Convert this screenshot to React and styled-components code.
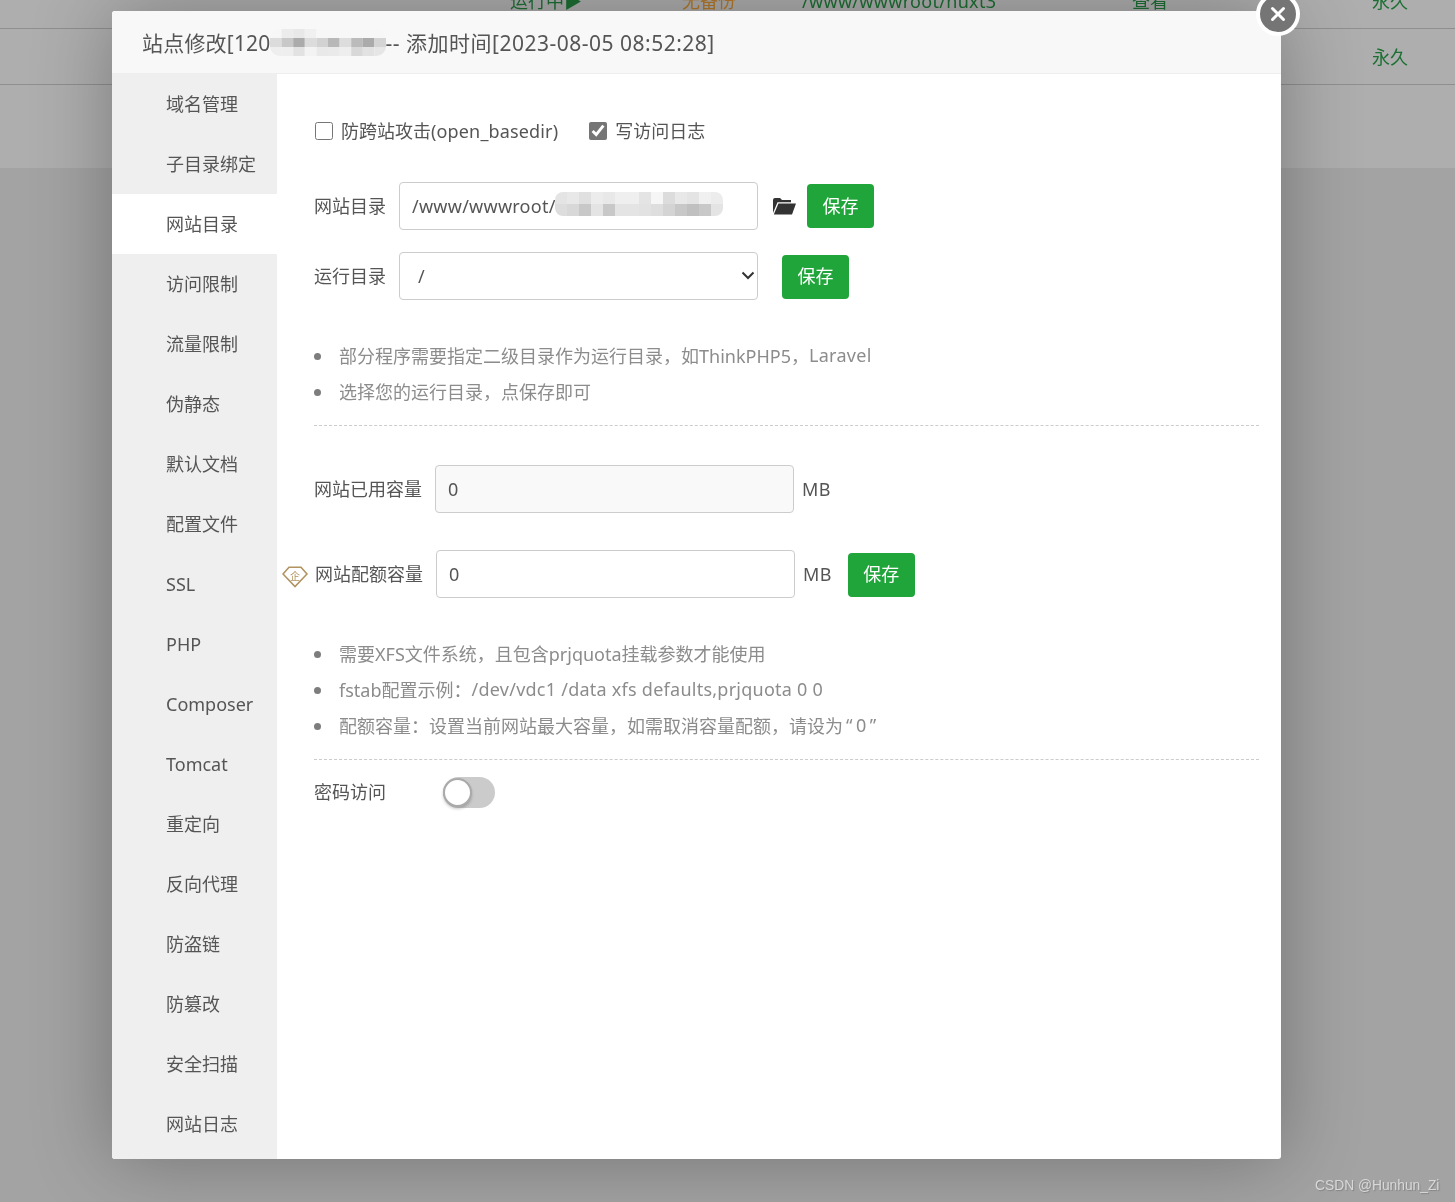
import React from "react";
import styled, { createGlobalStyle } from "styled-components";

const menu = [
  "域名管理", "子目录绑定", "网站目录", "访问限制", "流量限制", "伪静态",
  "默认文档", "配置文件", "SSL", "PHP", "Composer", "Tomcat",
  "重定向", "反向代理", "防盗链", "防篡改", "安全扫描", "网站日志",
];

const titleCells = [
  ["#f7f7f7", "#ececec", "#e8e8e8", "#f0f0f0", "#f7f7f7", "#f7f7f7", "#f7f7f7", "#f7f7f7", "#f7f7f7", "#f7f7f7"],
  ["#dcdcdc", "#c8c8c8", "#ababab", "#dcdcdc", "#d2d2d2", "#b8b8b8", "#dddddd", "#bbbbbb", "#ababab", "#d4d4d4"],
  ["#eeeeee", "#eeeeee", "#e2e2e2", "#f3f3f3", "#e9e9e9", "#eaeaea", "#eeeeee", "#d8d8d8", "#e2e2e2", "#e6e6e6"],
];

const pathCells = [
  ["#e4e4e4", "#e8e8e8", "#e0e0e0", "#ececec", "#e8e8e8", "#efefef", "#efefef", "#e4e4e4", "#f6f6f6", "#dcdcdc", "#e8e8e8", "#e4e4e4", "#f0f0f0", "#ececec"],
  ["#dddddd", "#d8d8d8", "#c8c8c8", "#e4e4e4", "#c8c8c8", "#e4e4e4", "#e4e4e4", "#e2e2e2", "#dedede", "#d4d4d4", "#c8c8c8", "#c0c0c0", "#c8c8c8", "#e4e4e4"],
];

const FONT = `"Noto Sans", "Noto Sans CJK SC", sans-serif`;

const GlobalStyle = createGlobalStyle`
  html, body {
    margin: 0;
    padding: 0;
    height: 100%;
    overflow: hidden;
  }
  body {
    font-family: ${FONT};
    font-size: 18px;
    color: #555;
  }
  * {
    box-sizing: border-box;
  }
`;

const Page = styled.div`
  position: relative;
  height: 1202px;
  overflow: hidden;
  background: #a3a3a3;
  filter: blur(0.35px);
`;
const Backdrop = styled.div`
  height: 168px;
  background: #aeaeae;
  overflow: hidden;
`;
const BackRow = styled.div`
  display: grid;
  grid-template-columns: 510px 172px 120px 330px 240px 1fr;
  height: 56px;
  line-height: 56px;
  border-bottom: 1px solid #8f8f8f;
  color: #1c6f33;
  &:first-child {
    margin-top: -27px;
  }
`;
const BackCell = styled.div`
  color: ${(props) => props.color || "inherit"};
  letter-spacing: ${(props) => props.$spacing || 0}px;
  white-space: nowrap;
`;
const Modal = styled.div`
  position: absolute;
  left: 112px;
  top: 11px;
  width: 1169px;
  height: 1148px;
  display: flex;
  flex-direction: column;
  background: #fff;
  border-radius: 3px;
  box-shadow: 0 0 80px rgba(0, 0, 0, 0.3);
`;
const Close = styled.button`
  position: absolute;
  top: -19px;
  right: -19px;
  width: 44px;
  height: 44px;
  padding: 0;
  display: flex;
  align-items: center;
  justify-content: center;
  border: 4px solid #fff;
  border-radius: 50%;
  background: #757575;
`;
const Title = styled.div`
  height: 63px;
  flex-shrink: 0;
  display: flex;
  align-items: center;
  padding-left: 30px;
  background: #f8f8f8;
  border-bottom: 1px solid #eee;
  border-radius: 3px 3px 0 0;
  font-size: 21px;
  letter-spacing: 0.2px;
  color: #555;
  white-space: pre;
`;
const TitleTail = styled.span`
  letter-spacing: 0.5px;
`;
const Body = styled.div`
  flex: 1;
  display: flex;
  min-height: 0;
`;
const Sidebar = styled.div`
  width: 165px;
  flex-shrink: 0;
  background: #efefef;
  border-bottom-left-radius: 3px;
`;
const MenuItem = styled.div`
  height: 60px;
  line-height: 60px;
  padding-left: 54px;
  white-space: nowrap;
  color: #555;
  background: ${(props) => (props.$active ? "#fff" : "transparent")};
`;
const Pane = styled.div`
  flex: 1;
  padding: 40px 22px 0 37px;
`;
const CheckRow = styled.div`
  display: flex;
  align-items: center;
  height: 34px;
  padding-left: 1px;
  gap: 31px;
`;
const CheckLabel = styled.label`
  display: flex;
  align-items: center;
  gap: 8px;
`;
const CheckText = styled.span`
  padding-bottom: 2px;
`;
const CheckBox = styled.input`
  width: 18px;
  height: 18px;
  margin: 0;
  accent-color: #757575;
`;
const Row = styled.div`
  position: relative;
  display: flex;
  align-items: center;
  height: ${(props) => props.$height || 48}px;
  margin-top: ${(props) => props.$top}px;
  padding-left: ${(props) => props.$indent || 0}px;
`;
const Label = styled.div`
  width: ${(props) => (props.$width ? `${props.$width}px` : "auto")};
  margin-right: 13px;
  padding-bottom: 2px;
  white-space: nowrap;
`;
const FieldWrap = styled.div`
  position: relative;
  width: 359px;
  height: 48px;
`;
const Field = styled.input`
  display: block;
  width: 359px;
  height: 48px;
  padding: 0 12px;
  border: 1px solid #ccc;
  border-radius: 4px;
  font-family: ${FONT};
  font-size: 18px;
  letter-spacing: 0.25px;
  color: #555;
  outline: none;
  background: ${(props) => (props.readOnly ? "#f9f9f9" : "#fff")};
`;
const Select = styled.select`
  display: block;
  width: 359px;
  height: 48px;
  padding: 0 18px;
  appearance: none;
  border: 1px solid #ccc;
  border-radius: 4px;
  font-family: ${FONT};
  font-size: 18px;
  color: #555;
  background: #fff;
`;
const Chevron = styled.svg`
  position: absolute;
  right: 3px;
  top: 19px;
  pointer-events: none;
`;
const PathMosaic = styled.svg`
  position: absolute;
  left: 156px;
  top: 10px;
`;
const TitleMosaic = styled.svg`
  flex-shrink: 0;
  width: 116px;
  margin-left: -1px;
`;
const SaveButton = styled.button`
  width: 67px;
  height: 44px;
  margin-left: ${(props) => props.$left}px;
  margin-top: ${(props) => (props.$low ? 2 : 0)}px;
  padding: 0 0 ${(props) => (props.$low ? 4 : 2)}px;
  border: none;
  border-radius: 4px;
  background: #20a53a;
  color: #fff;
  font-family: ${FONT};
  font-size: 18px;
`;
const FolderIcon = styled.svg`
  margin-left: 14px;
  flex-shrink: 0;
`;
const Unit = styled.span`
  margin-left: 8px;
  letter-spacing: 0.3px;
`;
const Tier = styled.svg`
  position: absolute;
  left: -32px;
  top: 16px;
`;
const Notes = styled.ul`
  margin: ${(props) => props.$top}px 0 0;
  padding: 0;
  list-style: none;
`;
const Note = styled.li`
  display: flex;
  align-items: center;
  height: 36px;
  padding-bottom: 2px;
  color: #8c8c8c;
  white-space: pre;
  &::before {
    content: "";
    width: 7px;
    height: 7px;
    margin: 2px 18px 0 0;
    border-radius: 50%;
    background: #7d7d7d;
  }
`;
const Latin = styled.span`
  letter-spacing: ${(props) => props.$spacing}px;
  margin-left: ${(props) => props.$left || 0}px;
`;
const Divider = styled.div`
  margin-top: 15px;
  border-top: 1px dashed #ccc;
`;
const Toggle = styled.div`
  position: relative;
  width: 52px;
  height: 31px;
  border-radius: 16px;
  background: #cbcbcb;
`;
const Knob = styled.div`
  position: absolute;
  left: 0;
  top: 1px;
  width: 29px;
  height: 29px;
  border: 2px solid #aaa;
  border-radius: 50%;
  background: #fff;
  box-shadow: 0 2px 3px rgba(0, 0, 0, 0.2);
`;
const Watermark = styled.div`
  position: absolute;
  left: 1315px;
  top: 1178px;
  font-family: "Liberation Sans", sans-serif;
  font-size: 13.8px;
  color: #d8d8d8;
  text-shadow: 1px 1px 1px #858585;
  white-space: nowrap;
`;

const Mosaic = ({ as: Wrap, rows, height, round }) => {
  const width = rows[0].length * 12;
  const rowH = height / rows.length;
  return (
    <Wrap width={width} height={height} viewBox={`0 0 ${width} ${height}`} preserveAspectRatio="none">
      <defs>
        <clipPath id={`clip-${width}`}>
          <rect width={width} height={height} rx={round} />
        </clipPath>
      </defs>
      <g clipPath={`url(#clip-${width})`}>
        {rows.map((row, y) =>
          row.map((fill, x) => (
            <rect key={`${x}-${y}`} x={x * 12} y={y * rowH} width="12" height={rowH} fill={fill} />
          ))
        )}
      </g>
    </Wrap>
  );
};

const App = () => {
  return (
    <Page>
      <GlobalStyle />
      <Backdrop>
        <BackRow>
          <div />
          <BackCell>运行中▶</BackCell>
          <BackCell color="#b4792a">无备份</BackCell>
          <BackCell $spacing={0.3}>/www/wwwroot/nuxt3</BackCell>
          <BackCell>查看</BackCell>
          <BackCell>永久</BackCell>
        </BackRow>
        <BackRow>
          <div />
          <div />
          <div />
          <div />
          <div />
          <BackCell>永久</BackCell>
        </BackRow>
      </Backdrop>

      <Modal>
        <Close aria-label="关闭">
          <svg width="20" height="20" viewBox="0 0 20 20">
            <path d="M4.5 4.5 L15.5 15.5 M15.5 4.5 L4.5 15.5" stroke="#fff" strokeWidth="3" strokeLinecap="round" />
          </svg>
        </Close>
        <Title>
          站点修改[120
          <Mosaic as={TitleMosaic} rows={titleCells} height={27} round={10} />
          <TitleTail>-- 添加时间[2023-08-05 08:52:28]</TitleTail>
        </Title>
        <Body>
          <Sidebar>
            {menu.map((item) => (
              <MenuItem key={item} $active={item === "网站目录"}>
                {item}
              </MenuItem>
            ))}
          </Sidebar>
          <Pane>
            <CheckRow>
              <CheckLabel>
                <CheckBox type="checkbox" />
                <CheckText>
                  防跨站攻击<Latin $spacing={0.15}>(open_basedir)</Latin>
                </CheckText>
              </CheckLabel>
              <CheckLabel>
                <CheckBox type="checkbox" defaultChecked />
                <CheckText>写访问日志</CheckText>
              </CheckLabel>
            </CheckRow>

            <Row $top={34}>
              <Label>网站目录</Label>
              <FieldWrap>
                <Field defaultValue="/www/wwwroot/" />
                <Mosaic as={PathMosaic} rows={pathCells} height={24} round={8} />
              </FieldWrap>
              <FolderIcon width="24" height="18" viewBox="0 0 24 18">
                <path d="M1 16 V3 Q1 1 3 1 H8 L10 3 H19 V5.2 H5.5 Z" fill="#333" />
                <path d="M6.4 6.6 H24 L20 17.5 H1.8 Z" fill="#333" />
              </FolderIcon>
              <SaveButton $left={11}>保存</SaveButton>
            </Row>
            <Row $top={22}>
              <Label>运行目录</Label>
              <FieldWrap>
                <Select defaultValue="/">
                  <option value="/">/</option>
                </Select>
                <Chevron width="14" height="9" viewBox="0 0 14 9">
                  <path d="M1.5 1.5 L7 7 L12.5 1.5" fill="none" stroke="#333" strokeWidth="2" />
                </Chevron>
              </FieldWrap>
              <SaveButton $left={24} $low>保存</SaveButton>
            </Row>

            <Notes $top={38}>
              <Note>
                部分程序需要指定二级目录作为运行目录，如ThinkPHP5，<Latin $spacing={0.3}>Laravel</Latin>
              </Note>
              <Note>选择您的运行目录，点保存即可</Note>
            </Notes>
            <Divider />

            <Row $top={39}>
              <Label>网站已用容量</Label>
              <Field readOnly defaultValue="0" />
              <Unit>MB</Unit>
            </Row>
            <Row $top={37} $indent={1}>
              <Tier width="26" height="22" viewBox="0 0 26 22">
                <path d="M7 1.2 H19 L25 8 L13 20.5 L1 8 Z" fill="#fff" stroke="#b0935f" strokeWidth="1.6" />
                <text x="13" y="13.5" textAnchor="middle" fontSize="10" fill="#b0935f">企</text>
              </Tier>
              <Label>网站配额容量</Label>
              <Field defaultValue="0" />
              <Unit>MB</Unit>
              <SaveButton $left={16} $low>保存</SaveButton>
            </Row>

            <Notes $top={38}>
              <Note>需要XFS文件系统，且包含prjquota挂载参数才能使用</Note>
              <Note>
                fstab配置示例：<Latin $spacing={0.25}>/dev/vdc1 /data xfs defaults,prjquota 0 0</Latin>
              </Note>
              <Note>
                配额容量：设置当前网站最大容量，如需取消容量配额，请设为<Latin $spacing={3.5} $left={3}>“0”</Latin>
              </Note>
            </Notes>
            <Divider />

            <Row $top={16} $height={32}>
              <Label $width={116}>密码访问</Label>
              <Toggle>
                <Knob />
              </Toggle>
            </Row>
          </Pane>
        </Body>
      </Modal>
      <Watermark>CSDN @Hunhun_Zi</Watermark>
    </Page>
  );
};

export default App;
